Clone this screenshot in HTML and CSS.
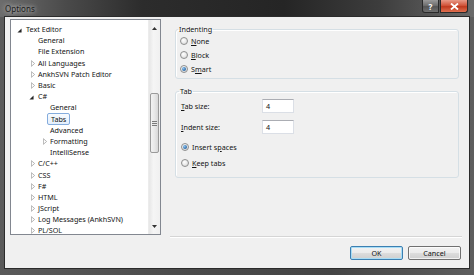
FILE: index.html
```html
<!DOCTYPE html>
<html>
<head>
<meta charset="utf-8">
<title>Options</title>
<link rel="stylesheet" href="styles.css">
</head>
<body>

  <svg class="defs" width="0" height="0">
    <symbol id="tri-open" viewBox="0 0 6 6"><path d="M5.5 0.5 L5.5 5.5 L0.5 5.5 Z" fill="#262626"/></symbol>
    <symbol id="tri-closed" viewBox="0 0 5 8"><path d="M0.5 0.5 L4.5 4 L0.5 7.5 Z" fill="#fff" stroke="#a3a3a3" stroke-width="1"/></symbol>
  </svg>

  <div class="window">
    <div class="titlebar">
      <span class="title">Options</span>
      <div class="caption-buttons">
        <span class="cap-help">?</span>
        <span class="cap-close">
          <svg width="9" height="7" viewBox="0 0 9 7"><path d="M1 0.5 L8 6.5 M8 0.5 L1 6.5" stroke="#fff" stroke-width="1.8"/></svg>
        </span>
      </div>
    </div>

    <div class="client">
      <div class="main">
        <div class="tree-box">
          <ul class="tree">
            <li class="lvl0"><span class="exp"><svg class="t-open"><use href="#tri-open"/></svg></span><span class="label">Text Editor</span></li>
            <li class="lvl1"><span class="exp"></span><span class="label">General</span></li>
            <li class="lvl1"><span class="exp"></span><span class="label">File Extension</span></li>
            <li class="lvl1"><span class="exp"><svg class="t-closed"><use href="#tri-closed"/></svg></span><span class="label">All Languages</span></li>
            <li class="lvl1"><span class="exp"><svg class="t-closed"><use href="#tri-closed"/></svg></span><span class="label">AnkhSVN Patch Editor</span></li>
            <li class="lvl1"><span class="exp"><svg class="t-closed"><use href="#tri-closed"/></svg></span><span class="label">Basic</span></li>
            <li class="lvl1"><span class="exp"><svg class="t-open"><use href="#tri-open"/></svg></span><span class="label">C#</span></li>
            <li class="lvl2"><span class="exp"></span><span class="label">General</span></li>
            <li class="lvl2"><span class="exp"></span><span class="label selected">Tabs</span></li>
            <li class="lvl2"><span class="exp"></span><span class="label">Advanced</span></li>
            <li class="lvl2"><span class="exp"><svg class="t-closed"><use href="#tri-closed"/></svg></span><span class="label">Formatting</span></li>
            <li class="lvl2"><span class="exp"></span><span class="label">IntelliSense</span></li>
            <li class="lvl1"><span class="exp"><svg class="t-closed"><use href="#tri-closed"/></svg></span><span class="label">C/C++</span></li>
            <li class="lvl1"><span class="exp"><svg class="t-closed"><use href="#tri-closed"/></svg></span><span class="label">CSS</span></li>
            <li class="lvl1"><span class="exp"><svg class="t-closed"><use href="#tri-closed"/></svg></span><span class="label">F#</span></li>
            <li class="lvl1"><span class="exp"><svg class="t-closed"><use href="#tri-closed"/></svg></span><span class="label">HTML</span></li>
            <li class="lvl1"><span class="exp"><svg class="t-closed"><use href="#tri-closed"/></svg></span><span class="label">JScript</span></li>
            <li class="lvl1"><span class="exp"><svg class="t-closed"><use href="#tri-closed"/></svg></span><span class="label">Log Messages (AnkhSVN)</span></li>
            <li class="lvl1"><span class="exp"><svg class="t-closed"><use href="#tri-closed"/></svg></span><span class="label">PL/SOL</span></li>
          </ul>
          <div class="scrollbar">
            <div class="sb-arrow"><svg width="5" height="3" viewBox="0 0 5 3"><path d="M0 3 L2.5 0 L5 3 Z" fill="#333"/></svg></div>
            <div class="sb-track">
              <div class="sb-thumb"><span class="grip"></span></div>
            </div>
            <div class="sb-arrow"><svg width="5" height="3" viewBox="0 0 5 3"><path d="M0 0 L2.5 3 L5 0 Z" fill="#333"/></svg></div>
          </div>
        </div>

        <div class="page">
          <fieldset class="group indenting">
            <legend>Indenting</legend>
            <div class="row"><span class="radio"></span><span><u>N</u>one</span></div>
            <div class="row"><span class="radio"></span><span><u>B</u>lock</span></div>
            <div class="row"><span class="radio checked"></span><span>S<u>m</u>art</span></div>
          </fieldset>

          <fieldset class="group tab">
            <legend>Tab</legend>
            <div class="row field"><span class="field-label"><u>T</u>ab size:</span><span class="textbox">4</span></div>
            <div class="row field"><span class="field-label"><u>I</u>ndent size:</span><span class="textbox">4</span></div>
            <div class="row opt first"><span class="radio checked"></span><span>Insert s<u>p</u>aces</span></div>
            <div class="row opt"><span class="radio"></span><span><u>K</u>eep tabs</span></div>
          </fieldset>
        </div>
      </div>

      <div class="footer">
        <span class="button default">OK</span>
        <span class="button">Cancel</span>
      </div>
    </div>
  </div>

</body>
</html>
```

FILE: styles.css
```css
html, body {
  margin: 0;
  padding: 0;
  width: 474px;
  height: 275px;
  overflow: hidden;
  background: #3c3c3c;
  font-family: "Noto Sans", "Open Sans", sans-serif;
  font-size: 7.2px;
  color: #141414;
}

.defs {
  position: absolute;
  width: 0;
  height: 0;
}

.window {
  height: 275px;
  display: flex;
  flex-direction: column;
  background: linear-gradient(to right, #5a5a5a 0%, #4a4a4a 40%, #444 70%, #5e5e5e 100%);
}

/* title bar */

.titlebar {
  height: 17px;
  display: flex;
  align-items: flex-start;
  padding-left: 5px;
  background: linear-gradient(to right, #6c6c6c 0%, #4a4a4a 14%, #2c2c2c 30%, #252525 60%, #3d3d3d 80%, #6a6a6a 100%);
}

.title {
  line-height: 17px;
  font-size: 8px;
  color: #1b1b1b;
  text-shadow: 0 0 4px rgba(230, 230, 230, 0.9), 0 0 8px rgba(200, 200, 200, 0.7);
}

.caption-buttons {
  margin-left: auto;
  margin-right: 6px;
  display: flex;
  gap: 1px;
}

.cap-help, .cap-close {
  height: 13px;
  display: flex;
  align-items: center;
  justify-content: center;
  border: 1px solid #2a2a2a;
  border-top: none;
  box-sizing: border-box;
}

.cap-help {
  width: 17px;
  border-radius: 0 0 0 3px;
  background: linear-gradient(#9a9a9a, #6f6f6f 45%, #555 55%, #707070);
  color: #fff;
  font-size: 8px;
  font-weight: bold;
}

.cap-close {
  width: 28px;
  border-radius: 0 0 3px 0;
  background: linear-gradient(#e89a88, #d2553b 45%, #c03a1f 55%, #e07050);
}

/* client area */

.client {
  flex: 1;
  margin: 0 5px 7px 5px;
  background: #f0f0f0;
  display: flex;
  flex-direction: column;
  box-shadow: 0 0 0 1px #2b2b2b;
}

.main {
  flex: 1;
  display: flex;
  padding: 2px 7px 0 5px;
  gap: 9px;
}

/* tree view */

.tree-box {
  width: 151px;
  height: 216px;
  box-sizing: border-box;
  border: 1px solid #828790;
  background: #fff;
  display: flex;
  overflow: hidden;
}

.tree {
  flex: 1;
  list-style: none;
  margin: 0;
  padding: 4px 0 0 0;
}

.tree li {
  height: 11.2px;
  display: flex;
  align-items: center;
  white-space: nowrap;
}

.tree .lvl0 { padding-left: 5px; }
.tree .lvl1 { padding-left: 17px; }
.tree .lvl2 { padding-left: 29px; }

.exp {
  width: 10px;
  display: flex;
  align-items: center;
}

.t-open {
  width: 5px;
  height: 5px;
  margin-left: 1px;
  margin-top: 1px;
}

.t-closed {
  width: 4px;
  height: 7px;
  margin-left: 3px;
}

.label {
  line-height: 11px;
}

.label.selected {
  margin-left: -3px;
  padding: 0 3px;
  border: 1px solid #84acdd;
  border-radius: 2px;
  line-height: 10px;
  background: linear-gradient(#f8fbfe, #e4effc);
}

/* scrollbar */

.scrollbar {
  width: 11px;
  display: flex;
  flex-direction: column;
  background: linear-gradient(to right, #e6e6e6, #f5f5f5 40%, #f0f0f0);
  border-left: 1px solid #ececec;
}

.sb-arrow {
  height: 16px;
  display: flex;
  align-items: center;
  justify-content: center;
}

.sb-track {
  flex: 1;
}

.sb-thumb {
  margin: 57px 1px 0 1px;
  height: 60px;
  box-sizing: border-box;
  border: 1px solid #9a9a9a;
  border-radius: 2px;
  background: linear-gradient(to right, #f3f3f3, #e8e8e8 50%, #d8d8d8);
  display: flex;
  align-items: center;
  justify-content: center;
}

.grip {
  width: 5px;
  height: 5px;
  background: repeating-linear-gradient(#7a7a7a 0 1px, #e8e8e8 1px 2px);
}

/* options page */

.page {
  flex: 1;
  display: flex;
  flex-direction: column;
  border-bottom: 1px solid #d5d5d5;
  box-shadow: 0 1px 0 #fff;
}

.group {
  margin: 0 3px 0 5px;
  padding: 0 0 0 4px;
  border: 1px solid #d5dfe5;
  border-radius: 3px;
  box-shadow: inset 1px 1px 0 #fff;
}

.group legend {
  padding: 0 1px;
  margin-left: -2px;
  line-height: 10px;
}

.indenting {
  margin-top: 5px;
  padding-bottom: 2px;
}

.tab {
  margin-top: 7px;
  padding-top: 3px;
  padding-bottom: 7px;
  padding-left: 5px;
}

.row {
  height: 14px;
  display: flex;
  align-items: center;
  gap: 3px;
}

.row.field {
  gap: 0;
}

.row.field + .row.field {
  margin-top: 7px;
}

.row.opt.first {
  margin-top: 6px;
}

.row.opt + .row.opt {
  margin-top: 2px;
}

.field-label {
  width: 81px;
}

.textbox {
  width: 32px;
  height: 14px;
  box-sizing: border-box;
  border: 1px solid #dbdfe6;
  border-top-color: #abadb3;
  background: #fff;
  padding-left: 3px;
  line-height: 12px;
}

.radio {
  width: 8px;
  height: 8px;
  box-sizing: border-box;
  border-radius: 50%;
  border: 1px solid #8e8f8f;
  background: radial-gradient(circle at 40% 35%, #fff 0%, #eaeaea 50%, #cfcfcf 100%);
  display: flex;
  align-items: center;
  justify-content: center;
}

.radio.checked::after {
  content: "";
  width: 4px;
  height: 4px;
  border-radius: 50%;
  background: radial-gradient(circle at 35% 35%, #8fc3ee, #2a69a8 70%, #1b4c8a);
}

/* buttons */

.footer {
  height: 31px;
  box-sizing: border-box;
  display: flex;
  justify-content: flex-end;
  align-items: flex-start;
  gap: 5px;
  padding: 9px 8px 0 0;
}

.button {
  width: 53px;
  height: 14px;
  box-sizing: border-box;
  border: 1px solid #707070;
  border-radius: 2px;
  background: linear-gradient(#f2f2f2 0%, #ebebeb 50%, #dddddd 51%, #cfcfcf 100%);
  display: flex;
  align-items: center;
  justify-content: center;
  box-shadow: inset 0 0 0 1px rgba(255, 255, 255, 0.7);
}

.button.default {
  border-color: #3c7fb1;
  box-shadow: inset 0 0 0 1px #a8ddf6;
}
```
